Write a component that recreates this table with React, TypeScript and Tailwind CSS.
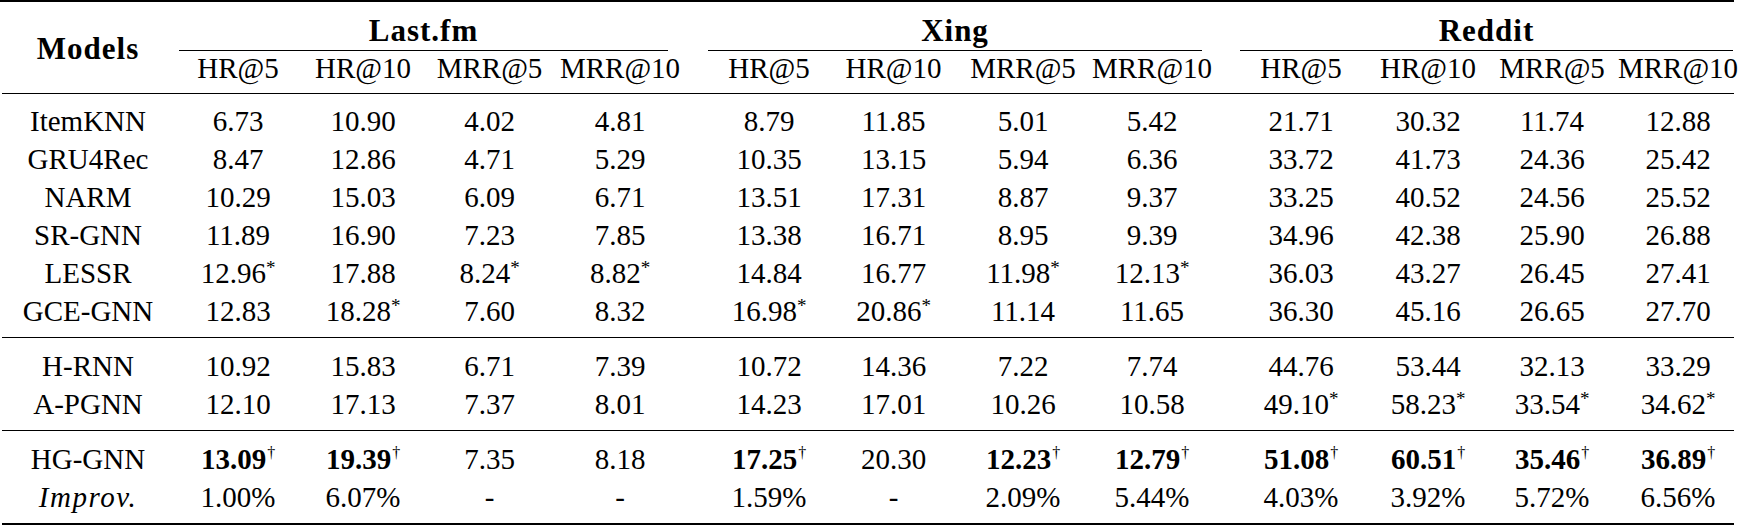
import React from "react";

const GRID =
  "grid grid-cols-[176px_124px_126px_127px_134px_19px_126px_123px_136px_122px_25px_126px_128px_120px_132px]";

type Row = { name: string; vals: string[]; italic?: boolean; bold?: boolean };

const block1: Row[] = [
  { name: "ItemKNN", vals: ["6.73", "10.90", "4.02", "4.81", "8.79", "11.85", "5.01", "5.42", "21.71", "30.32", "11.74", "12.88"] },
  { name: "GRU4Rec", vals: ["8.47", "12.86", "4.71", "5.29", "10.35", "13.15", "5.94", "6.36", "33.72", "41.73", "24.36", "25.42"] },
  { name: "NARM", vals: ["10.29", "15.03", "6.09", "6.71", "13.51", "17.31", "8.87", "9.37", "33.25", "40.52", "24.56", "25.52"] },
  { name: "SR-GNN", vals: ["11.89", "16.90", "7.23", "7.85", "13.38", "16.71", "8.95", "9.39", "34.96", "42.38", "25.90", "26.88"] },
  { name: "LESSR", vals: ["12.96*", "17.88", "8.24*", "8.82*", "14.84", "16.77", "11.98*", "12.13*", "36.03", "43.27", "26.45", "27.41"] },
  { name: "GCE-GNN", vals: ["12.83", "18.28*", "7.60", "8.32", "16.98*", "20.86*", "11.14", "11.65", "36.30", "45.16", "26.65", "27.70"] },
];

const block2: Row[] = [
  { name: "H-RNN", vals: ["10.92", "15.83", "6.71", "7.39", "10.72", "14.36", "7.22", "7.74", "44.76", "53.44", "32.13", "33.29"] },
  { name: "A-PGNN", vals: ["12.10", "17.13", "7.37", "8.01", "14.23", "17.01", "10.26", "10.58", "49.10*", "58.23*", "33.54*", "34.62*"] },
];

const block3: Row[] = [
  { name: "HG-GNN", bold: true, vals: ["13.09†", "19.39†", "7.35", "8.18", "17.25†", "20.30", "12.23†", "12.79†", "51.08†", "60.51†", "35.46†", "36.89†"] },
  { name: "Improv.", italic: true, vals: ["1.00%", "6.07%", "-", "-", "1.59%", "-", "2.09%", "5.44%", "4.03%", "3.92%", "5.72%", "6.56%"] },
];

function Val({ v, bold }: { v: string; bold?: boolean }) {
  const last = v.slice(-1);
  if (last === "*") {
    return (
      <span className="whitespace-nowrap">
        {v.slice(0, -1)}
        <span className="relative -top-[9px] text-[19px]">*</span>
      </span>
    );
  }
  if (last === "†") {
    return (
      <span className="whitespace-nowrap">
        <span className={bold ? "font-bold" : ""}>{v.slice(0, -1)}</span>
        <span className="relative -top-[11px] text-[16px] ml-[1px]">†</span>
      </span>
    );
  }
  return <span className="whitespace-nowrap">{v}</span>;
}

function Cell({ children }: { children: React.ReactNode }) {
  return <div className="flex h-[38px] items-center justify-center whitespace-nowrap">{children}</div>;
}

function DataRow({ row }: { row: Row }) {
  const v = row.vals;
  return (
    <div className={GRID}>
      <Cell>
        {row.italic ? <span className="italic tracking-[1.5px]">{row.name}</span> : row.name}
      </Cell>
      {v.slice(0, 4).map((x, i) => (
        <Cell key={"a" + i}>
          <Val v={x} bold={row.bold} />
        </Cell>
      ))}
      <div />
      {v.slice(4, 8).map((x, i) => (
        <Cell key={"b" + i}>
          <Val v={x} bold={row.bold} />
        </Cell>
      ))}
      <div />
      {v.slice(8, 12).map((x, i) => (
        <Cell key={"c" + i}>
          <Val v={x} bold={row.bold} />
        </Cell>
      ))}
    </div>
  );
}

export default function App() {
  return (
    <div className="w-[1746px] h-[527px] overflow-hidden bg-white text-black font-['Liberation_Serif',serif] text-[29px] leading-none">
      <div className="h-[2px] w-[1734px] bg-black" />
      {/* header */}
      <div className={GRID + " grid-rows-[48px_1px_35px]"}>
        <div className="row-span-3 flex items-center justify-center pt-[8px] text-[31px] font-bold tracking-[1px]">
          Models
        </div>
        <div className="col-span-4 ml-[3px] mr-[19px] flex items-center justify-center pt-[8px] text-[31px] font-bold tracking-[1px]">
          Last.fm
        </div>
        <div />
        <div className="col-span-4 ml-[2px] mr-[11px] flex items-center justify-center pt-[8px] text-[31px] font-bold tracking-[1px]">
          Xing
        </div>
        <div />
        <div className="col-span-4 ml-[2px] mr-[11px] flex items-center justify-center pt-[8px] text-[31px] font-bold tracking-[1px]">
          Reddit
        </div>
        <div className="col-start-2 col-span-4 ml-[3px] mr-[19px] bg-black" />
        <div className="col-start-7 col-span-4 ml-[2px] mr-[11px] bg-black" />
        <div className="col-start-12 col-span-4 ml-[2px] mr-[11px] bg-black" />
        <div className="col-start-2 row-start-3 flex items-center justify-center">HR@5</div>
        <div className="col-start-3 row-start-3 flex items-center justify-center">HR@10</div>
        <div className="col-start-4 row-start-3 flex items-center justify-center">MRR@5</div>
        <div className="col-start-5 row-start-3 flex items-center justify-center whitespace-nowrap">MRR@10</div>
        <div className="col-start-7 row-start-3 flex items-center justify-center">HR@5</div>
        <div className="col-start-8 row-start-3 flex items-center justify-center">HR@10</div>
        <div className="col-start-9 row-start-3 flex items-center justify-center">MRR@5</div>
        <div className="col-start-10 row-start-3 flex items-center justify-center whitespace-nowrap">MRR@10</div>
        <div className="col-start-12 row-start-3 flex items-center justify-center">HR@5</div>
        <div className="col-start-13 row-start-3 flex items-center justify-center">HR@10</div>
        <div className="col-start-14 row-start-3 flex items-center justify-center">MRR@5</div>
        <div className="col-start-15 row-start-3 flex items-center justify-center whitespace-nowrap">MRR@10</div>
      </div>
      <div className="mt-[7px] ml-[2px] h-[1px] w-[1732px] bg-black" />
      <div className="mt-[8px]">
        {block1.map((r) => (
          <DataRow key={r.name} row={r} />
        ))}
      </div>
      <div className="mt-[7px] ml-[2px] h-[1px] w-[1732px] bg-black" />
      <div className="mt-[9px]">
        {block2.map((r) => (
          <DataRow key={r.name} row={r} />
        ))}
      </div>
      <div className="mt-[7px] ml-[2px] h-[1px] w-[1732px] bg-black" />
      <div className="mt-[9px]">
        {block3.map((r) => (
          <DataRow key={r.name} row={r} />
        ))}
      </div>
      <div className="mt-[7px] ml-[2px] h-[2px] w-[1732px] bg-black" />
    </div>
  );
}
